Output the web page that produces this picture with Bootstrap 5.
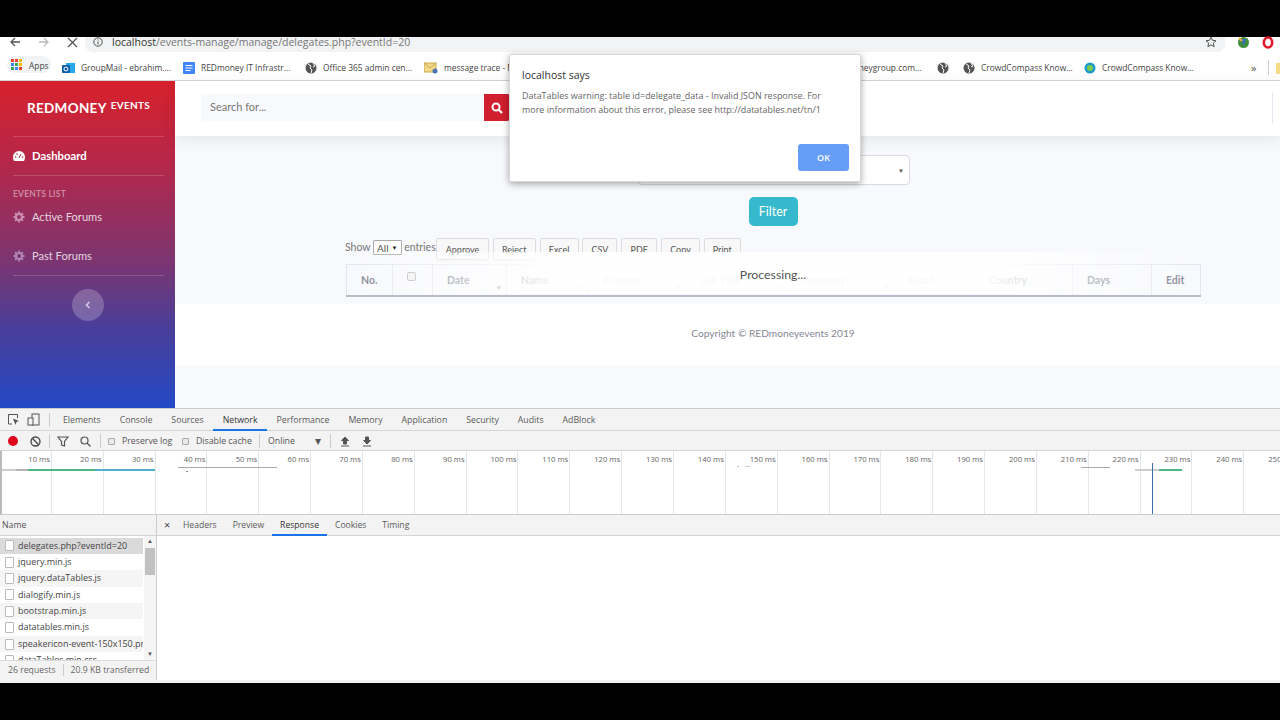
<!DOCTYPE html>
<html lang="en"><head><meta charset="utf-8"><title>Delegates</title>
<link rel="stylesheet" href="https://cdn.jsdelivr.net/npm/bootstrap@5.3.0/dist/css/bootstrap.min.css">
<style>
html,body{height:720px;overflow:hidden;background:#000}
body{font-family:"Noto Sans","Open Sans",sans-serif;position:relative;width:1280px}
.bar-black-top{height:37px;background:#000}
.chrome-top{height:19px;background:#fff;position:relative}
.chrome-nav{width:85px;padding-left:9px;gap:17px;height:10px}
.omni{position:absolute;left:85px;top:0;width:1140px;height:15px;background:#f1f3f4;border-radius:0 0 8px 8px;font:10.5px/10px "Open Sans",sans-serif;color:#777;padding:0 0 5px 8px;display:flex;align-items:center;gap:9px}
.omni b{font-weight:400;color:#333}
.chrome-right{position:absolute;left:1205px;top:0;height:10px;gap:0}
.ci-a{margin-left:20px}.ci-b{margin-left:12px}
.books{height:25px;background:#fff;border-bottom:1px solid #d4d5d6;font:8.4px/12px "Open Sans",sans-serif;color:#444;position:relative}
.bk{position:absolute;top:3px;height:18px;display:flex;align-items:center;gap:6px;white-space:nowrap}
.bk1{left:7px;background:#f1f3f4;border-radius:9px;padding:0 2px 0 4px;width:44px;top:0;height:17px;gap:7px}
.bk1 span{padding-top:3px}
.bk2{left:62px}.bk3{left:183px}.bk4{left:305px}.bk5{left:424px}
.bk6{left:782px}.bk7{left:937px}.bk8{left:963px}.bk9{left:1084px}
.bk10{left:1251px;color:#555;font-size:11px}
.bk-sep{position:absolute;left:1268px;top:4px;height:15px;width:1px;background:#d0d0d0}
.bk-folder{position:absolute;left:1276px;top:7px;width:4px;height:11px;background:#f5dc84}
.app-page{height:327px;background:#fff;font-family:"Lato",sans-serif}
.side{width:175px;flex:none;background:linear-gradient(180deg,#d7212b 0%,#b5274a 25%,#7c3570 55%,#4a3e98 75%,#2349c6 100%);color:#fff;padding:0 11px 0 13px}
.brandline{height:55px;font-family:"Lato",sans-serif;font-weight:700;font-size:13.5px;letter-spacing:.3px;padding-left:14px;padding-top:17px;line-height:20px}
.brandline sup{font-size:10px;top:-.45em;margin-left:1px}
.side-rule{height:1px;background:rgba(255,255,255,.17)}
.side-item{display:flex;align-items:center;gap:7px;font:11.1px/14px "Lato",sans-serif;color:rgba(255,255,255,.8)}
.side-item.on{color:#fff;font-weight:700;height:38px;font-size:11.3px}
.side-item.dim{height:39px}
.side-head{font:700 8.5px/11px "Lato",sans-serif;color:rgba(255,255,255,.45);padding-top:13px;letter-spacing:.2px;height:21px}
.side-tgl{width:32px;height:32px;border-radius:50%;background:rgba(255,255,255,.22);margin:13px 0 0 59px;display:flex;align-items:center;justify-content:center}
.main-col{background:#f8f9fc;min-width:0}
.topbar{height:55px;background:#fff;box-shadow:0 3px 14px rgba(58,59,69,.1);padding-left:26px;padding-top:13px;position:relative}
.searchbox{width:283px;height:27px;background:#f8f9fc;border-radius:3px 0 0 3px;font:11px/26px "Lato",sans-serif;color:#777;padding-left:9px}
.searchbtn{width:26px;height:27px;background:#d01f2d;display:flex;align-items:center;justify-content:center;border-radius:0 3px 3px 0}
.topdiv{position:absolute;left:1097px;top:12px;width:1px;height:30px;background:#e3e6f0}
.stage{height:168px;position:relative}
.stage-inner{width:854px;margin-left:171px}
.sel-row{height:61px;padding:19px 290px 0 0;display:flex;justify-content:flex-end}
.sel-fake{width:272px;height:30px;border:1px solid #d9dae5;border-radius:4px;background:#fff;display:flex;align-items:center;justify-content:flex-end;padding-right:5px;font-size:6px;color:#555}
.fil-row{height:43px;display:flex;justify-content:center}
.btn.fil-btn{width:49px;height:29px;padding:0;background:#36b9cc;color:#fff;border:0;font:12.5px/29px "Lato",sans-serif;border-radius:5px}
.tool-row{height:24px;font:10.5px/14px "Lato",sans-serif;color:#777;display:flex;align-items:flex-start;position:relative;margin-left:-1px}
.show-sel{display:inline-flex;align-items:center;gap:3px;height:15px;border:1px solid #aaa;background:#fff;padding:0 3px;margin:0 0;color:#555;font-size:10px;border-radius:1px;vertical-align:top}
.show-sel i{font-style:normal;font-size:6px;color:#222}
.tbtn-grp{position:absolute;left:91px;top:-2px;display:flex;gap:3.8px}
.btn.tbtn{height:22px;padding:0;background:#f8f8f8;border:1px solid #ddd;border-radius:2px;color:#555;font:9px/22px "Lato",sans-serif;box-shadow:0 1px 1px rgba(0,0,0,.05)}
.w53{width:53px}.w43{width:43px}.w39{width:39px}.w35{width:35px}.w36{width:36px}.w37{width:37px}
.table.dt{width:854px;table-layout:fixed;margin:0;--bs-table-bg:transparent;border-color:#e3e6f0;font:700 10.5px/14px "Lato",sans-serif;color:#858796}
.table.dt th{height:31px;padding:0 0 0 14px;text-align:left;vertical-align:middle;border:1px solid #e3e6f0;border-bottom:2px solid #b9bbc6;font-weight:700;color:#858796;position:relative}
.table.dt th.srt::after{content:"▾";position:absolute;right:5px;bottom:4px;font-size:7px;line-height:8px;color:#888}
.cb-fake{display:inline-block;width:9px;height:9px;border:1px solid #bbb;border-radius:2px;background:#f1f1f1;margin-bottom:4px}
.c1{width:46px}.c2{width:40px}.c3{width:74px}.c4{width:82px}.c5{width:98px}.c6{width:100px}.c7{width:108px}.c8{width:80px}.c9{width:98px}.c10{width:79px}.c11{width:49px}
.proc{position:absolute;left:171px;top:116px;width:854px;height:42px;background:linear-gradient(90deg,rgba(255,255,255,0) 0%,rgba(255,255,255,.95) 25%,rgba(255,255,255,.95) 75%,rgba(255,255,255,0) 100%);text-align:center;font:12.3px/46px "Lato",sans-serif;color:#555}
.foot{height:61px;background:#fff;font:10.2px/14px "Lato",sans-serif;color:#858796;padding-top:22px}
.foot div{width:854px;margin-left:171px;text-align:center}
.rest{flex:1;background:#f8f9fc}
.dev{background:#fff;font:8.75px/12px "Open Sans",sans-serif;color:#555;border-top:1px solid #ccc}
.dv-tabs{height:22px;background:#f3f3f3;border-bottom:1px solid #d5d5d5;position:relative}
.dv-tabs .ic1{position:absolute;left:7px;top:4px}
.dv-tabs .ic2{position:absolute;left:27px;top:4px}
.vsep{width:1px;background:#ccc;height:14px}
.dv-sep1{position:absolute;left:49px;top:4px}
.tabs-line{position:absolute;left:53.5px;top:0;display:flex;height:21px}
.dtab{padding:0 9.5px;line-height:22px;color:#5a5a5a;white-space:nowrap}
.dtab.act{border-bottom:2px solid #1a73e8;color:#333;height:22px}
.dv-tools{height:20px;background:#f3f3f3;border-bottom:1px solid #d5d5d5;position:relative}
.ti{position:absolute;top:3px;display:flex;align-items:center;gap:7px;height:14px;white-space:nowrap}
.ti-r{left:8px}
.ti-x{left:30px;gap:0}.ti-x .vsep{margin-left:8px}
.ti-a{left:57px;gap:0}.ti-a .vsep{margin-left:9px}.ti-s{margin-left:11px}
.ti-b{left:108px}.ti-c{left:182px}.ti-d{left:268px}.ti-e{left:315px;font-size:12px}.ti-f{left:330px}.ti-g{left:340px}.ti-h{left:362px}
.cb2{width:7px;height:7px;border:1px solid #aaa;background:#e9e9e9;border-radius:1px;display:inline-block}
.rec{width:10px;height:10px;border-radius:50%;background:#e0081c}
.tl{height:64px;position:relative;display:flex;background:#fff;border-bottom:1px solid #ccc;overflow:hidden;border-left:2px solid #bbb}
.tk{flex:0 0 51.85px;border-right:1px solid #e6e6e6;text-align:right;padding:2px 1px 0 0;font-size:7.7px;line-height:12px;color:#666;white-space:nowrap}
.tk:first-child{flex-basis:49.85px}
.mk{position:absolute;height:2px}
.m1{left:0;top:18px;width:14px;background:#ccc}.m2{left:14px;top:18px;width:12px;background:#b5b5b5}.m3{left:26px;top:18px;width:67px;background:#4db882}.m4{left:93px;top:18px;width:60px;background:#52aed0}
.m5{left:176px;top:16px;width:99px;height:1px;background:#aaa}
.m6{left:184px;top:20px;width:2px;height:1px;background:#888}
.m7{left:735px;top:15px;width:2px;height:1px;background:#bbb}.m8{left:743px;top:15px;width:5px;height:1px;background:#ccc}
.m9{left:1079px;top:16px;width:29px;height:1px;background:#aaa}
.m10{left:1133px;top:18px;width:24px;background:#ccc}.m11{left:1157px;top:18px;width:23px;background:#4db882}
.m12{left:1150px;top:12px;width:1px;height:51px;background:#3a6ea8}
.dv-low{height:165px}
.lst{width:157px;flex:none;border-right:1px solid #ccc;display:flex;flex-direction:column}
.lst-h{height:21px;background:#f3f3f3;border-bottom:1px solid #d5d5d5;line-height:20px;padding-left:2px;flex:none}
.lst-body{flex:1;overflow:hidden;position:relative;min-height:0;padding-top:1.5px}
.rw{height:16.4px;line-height:16.4px;display:flex;align-items:center;gap:4px;padding-left:5px;width:143px;white-space:nowrap;overflow:hidden;color:#444;font-size:8.95px}
.rw.alt{background:#f5f5f5}
.rw.sel{background:#dadada}
.doc{flex:none;width:9px;height:11px;border:1px solid #bbb;background:#fff;border-radius:1px}
.sbar{position:absolute;left:144px;top:0;width:12px;height:100%;background:#f5f5f5;display:flex;flex-direction:column;align-items:center}
.sth{width:10px;height:27px;background:#c1c1c1;margin-top:1px}
.sar{font-size:6px;line-height:11px;color:#555}
.sar.end{margin-top:auto}
.lst-s{height:20px;flex:none;background:#f3f3f3;border-top:1px solid #ddd;padding:0 0 2px 8px;color:#666;display:flex;gap:7px;white-space:nowrap;align-items:center;font-size:8.7px}
.lst-s .vsep{height:12px}
.det-h{height:21px;background:#f3f3f3;border-bottom:1px solid #d5d5d5;display:flex;padding-left:7px;flex:none}
.det-x{width:10px;line-height:20px;font-size:11px;color:#444}
.det-tabs{display:flex;margin-left:1px}
.dtab2{padding:0 8px;line-height:20px;color:#5a5a5a;font-size:8.6px}
.dtab2.act{border-bottom:2px solid #1a73e8;color:#333;height:21px}
.dlg{position:absolute;left:509px;top:54px;width:352px;height:128px;background:#fff;border:1px solid #d7d7d7;border-radius:2px;box-shadow:0 2px 7px rgba(0,0,0,.35);padding:13px 11px 0 12px;font-family:"Open Sans",sans-serif;z-index:5}
.dlg-t{font-size:10.5px;line-height:14px;color:#333;margin-bottom:7px}
.dlg-m{font-size:8.95px;line-height:14px;color:#666;height:55px;width:312px}
.dlg-f{display:flex;justify-content:flex-end}
.btn.okb{width:51px;height:27px;padding:0;background:#669df6;color:#fff;border:0;border-radius:3px;font:600 9px/27px "Open Sans",sans-serif}
.bot-band{height:3px;background:#f1f1f1}
</style></head>
<body>
<div class="bar-black-top"></div>
<div class="chrome-top d-flex">
  <div class="d-flex align-items-center chrome-nav">
    <svg width="12" height="12" viewBox="0 0 12 12"><path d="M11 6H2M6 2 2 6l4 4" fill="none" stroke="#555" stroke-width="1.3"/></svg>
    <svg width="12" height="12" viewBox="0 0 12 12"><path d="M1 6h9M6 2l4 4-4 4" fill="none" stroke="#bbb" stroke-width="1.3"/></svg>
    <svg width="11" height="11" viewBox="0 0 11 11"><path d="M1 1l9 9M10 1l-9 9" fill="none" stroke="#555" stroke-width="1.3"/></svg>
  </div>
  <div class="omni"><svg width="10" height="10" viewBox="0 0 10 10"><circle cx="5" cy="5" r="4.2" fill="none" stroke="#555"/><path d="M5 4.5v3M5 2.5v1" stroke="#555"/></svg><span><b>localhost</b>/events-manage/manage/delegates.php?eventId=20</span></div>
  <div class="chrome-right d-flex align-items-center">
    <svg width="12" height="12" viewBox="0 0 12 12"><path d="M6 1l1.5 3.3 3.5.4-2.600 2.400.7 3.600L6 8.900l-3.100 1.800.7-3.600L1 4.700l3.500-.4z" fill="none" stroke="#555"/></svg>
    <svg class="ci-a" width="13" height="13" viewBox="0 0 13 13"><circle cx="6.5" cy="6.5" r="5.5" fill="#3e8e3e"/><path d="M4 3h5l-2.500 7z" fill="#3a6ec2"/><path d="M2 2l3 3" stroke="#e8b030" stroke-width="2"/></svg>
    <svg class="ci-b" width="12" height="13" viewBox="0 0 12 13"><ellipse cx="6" cy="6.5" rx="4.2" ry="5" fill="none" stroke="#e0182b" stroke-width="2.6"/></svg>
  </div>
</div>
<div class="books">
  <div class="bk bk1"><svg width="11" height="11" viewBox="0 0 11 11"><g><rect x="0" y="0" width="3" height="3" fill="#ea4335"/><rect x="4" y="0" width="3" height="3" fill="#ea4335"/><rect x="8" y="0" width="3" height="3" fill="#fbbc04"/><rect x="0" y="4" width="3" height="3" fill="#4285f4"/><rect x="4" y="4" width="3" height="3" fill="#34a853"/><rect x="8" y="4" width="3" height="3" fill="#fbbc04"/><rect x="0" y="8" width="3" height="3" fill="#34a853"/><rect x="4" y="8" width="3" height="3" fill="#4285f4"/><rect x="8" y="8" width="3" height="3" fill="#ea4335"/></g></svg><span>Apps</span></div>
  <div class="bk bk2"><svg width="13" height="13" viewBox="0 0 13 13"><rect x="4" y="1" width="9" height="10" fill="#28a8ea"/><rect x="0" y="3" width="8" height="8" rx="1" fill="#0f5fa8"/><circle cx="4" cy="7" r="2" fill="none" stroke="#fff"/></svg><span>GroupMail - ebrahim....</span></div>
  <div class="bk bk3"><svg width="12" height="12" viewBox="0 0 12 12"><rect width="12" height="12" rx="1" fill="#4285f4"/><path d="M2.500 3.500h7M2.500 6h7M2.500 8.500h5" stroke="#fff"/></svg><span>REDmoney IT Infrastr...</span></div>
  <div class="bk bk4"><svg width="12" height="12" viewBox="0 0 12 12"><circle cx="6" cy="6" r="5.5" fill="#555"/><path d="M3 2l3 2-1 2 2 2-1 3M8 1l2 3-2 1" fill="none" stroke="#fff"/></svg><span>Office 365 admin cen...</span></div>
  <div class="bk bk5"><svg width="14" height="12" viewBox="0 0 14 12"><rect y="1" width="12" height="9" fill="#f3d98a" stroke="#c9a94e"/><path d="M0 1l6 5 6-5" fill="none" stroke="#c9a94e"/><circle cx="11" cy="9" r="2.5" fill="#4a76b8"/></svg><span>message trace - M</span></div>
  <div class="bk bk6"><span class="ms-5">REDmoneygroup.com...</span></div>
  <div class="bk bk7"><svg width="12" height="12" viewBox="0 0 12 12"><circle cx="6" cy="6" r="5.5" fill="#555"/><path d="M3 2l3 2-1 2 2 2-1 3M8 1l2 3-2 1" fill="none" stroke="#fff"/></svg></div>
  <div class="bk bk8"><svg width="12" height="12" viewBox="0 0 12 12"><circle cx="6" cy="6" r="5.5" fill="#555"/><path d="M3 2l3 2-1 2 2 2-1 3M8 1l2 3-2 1" fill="none" stroke="#fff"/></svg><span>CrowdCompass Know...</span></div>
  <div class="bk bk9"><svg width="12" height="12" viewBox="0 0 12 12"><circle cx="6" cy="6" r="5.5" fill="#1d9ac9"/><circle cx="6" cy="6" r="3" fill="#7ec94e"/></svg><span>CrowdCompass Know...</span></div>
  <div class="bk bk10">»</div><div class="bk-sep"></div><div class="bk-folder"></div>
</div>
<div class="app-page d-flex">
  <aside class="side d-flex flex-column">
    <div class="brandline">REDMONEY <sup>EVENTS</sup></div>
    <div class="side-rule"></div>
    <div class="side-item on"><svg width="12" height="10" viewBox="0 0 12 10"><path d="M6 0a6 6 0 0 1 6 6c0 1.500-.4 2.800-1 4H1C.4 8.800 0 7.500 0 6a6 6 0 0 1 6-6z" fill="#fff"/><path d="M6 7l2-4" stroke="#b5274a"/><circle cx="2.500" cy="6" r=".8" fill="#b5274a"/><circle cx="4" cy="3" r=".8" fill="#b5274a"/><circle cx="9.500" cy="6" r=".8" fill="#b5274a"/></svg><span>Dashboard</span></div>
    <div class="side-rule"></div>
    <div class="side-head">EVENTS LIST</div>
    <div class="side-item dim"><svg width="12" height="12" viewBox="0 0 12 12"><circle cx="6" cy="6" r="3" fill="none" stroke="#c98fb0" stroke-width="2.200"/><path d="M6 .5v2M6 9.500v2M.5 6h2M9.500 6h2M2.100 2.100l1.400 1.400M8.500 8.500l1.400 1.400M2.100 9.900l1.400-1.400M8.500 3.500l1.400-1.400" stroke="#c98fb0" stroke-width="1.800"/></svg><span>Active Forums</span></div>
    <div class="side-item dim"><svg width="12" height="12" viewBox="0 0 12 12"><circle cx="6" cy="6" r="3" fill="none" stroke="#b084b4" stroke-width="2.200"/><path d="M6 .5v2M6 9.500v2M.5 6h2M9.500 6h2M2.100 2.100l1.400 1.400M8.500 8.500l1.400 1.400M2.100 9.900l1.400-1.400M8.500 3.500l1.400-1.400" stroke="#b084b4" stroke-width="1.800"/></svg><span>Past Forums</span></div>
    <div class="side-rule"></div>
    <div class="side-tgl"><svg width="6" height="8" viewBox="0 0 6 8"><path d="M4.500 1 1.500 4l3 3" fill="none" stroke="#d5c8e6" stroke-width="1.600"/></svg></div>
  </aside>
  <div class="main-col flex-grow-1 d-flex flex-column">
    <div class="topbar d-flex">
      <div class="searchbox">Search for...</div>
      <div class="searchbtn"><svg width="12" height="12" viewBox="0 0 12 12"><circle cx="5" cy="5" r="3.500" fill="none" stroke="#fff" stroke-width="2"/><path d="M7.500 7.500 11 11" stroke="#fff" stroke-width="2.200"/></svg></div>
      <div class="topdiv"></div>
    </div>
    <div class="stage">
      <div class="stage-inner">
        <div class="sel-row"><div class="sel-fake">▼</div></div>
        <div class="fil-row"><button class="btn fil-btn">Filter</button></div>
        <div class="tool-row">
          <span>Show <span class="show-sel">All <i>▼</i></span> entries</span>
          <div class="tbtn-grp">
            <button class="btn tbtn w53">Approve</button><button class="btn tbtn w43">Reject</button><button class="btn tbtn w39">Excel</button><button class="btn tbtn w35">CSV</button><button class="btn tbtn w36">PDF</button><button class="btn tbtn w39">Copy</button><button class="btn tbtn w37">Print</button>
          </div>
        </div>
        <table class="table dt">
          <thead><tr><th class="c1">No.</th><th class="c2"><span class="cb-fake"></span></th><th class="c3 srt">Date</th><th class="c4 srt">Name</th><th class="c5 srt">Purpose</th><th class="c6 srt">Job Title</th><th class="c7 srt">Company</th><th class="c8">Email</th><th class="c9">Country</th><th class="c10">Days</th><th class="c11">Edit</th></tr></thead>
        </table>
      </div>
      <div class="proc">Processing...</div>
    </div>
    <div class="foot"><div>Copyright © REDmoneyevents 2019</div></div>
    <div class="rest"></div>
  </div>
</div>
<div class="dev">
  <div class="dv-tabs">
    <svg class="ic1" width="13" height="13" viewBox="0 0 13 13"><path d="M5 11H1.500V1.500h9V5" fill="none" stroke="#555"/><path d="M6 5.500l6 2.500-2.500 1L8.500 12z" fill="#555"/></svg>
    <svg class="ic2" width="13" height="13" viewBox="0 0 13 13"><rect x="5" y="1" width="7" height="11" fill="none" stroke="#555"/><rect x="1" y="5" width="5" height="7" fill="#f3f3f3" stroke="#555"/></svg>
    <div class="vsep dv-sep1"></div>
    <div class="tabs-line"><div class="dtab">Elements</div><div class="dtab">Console</div><div class="dtab">Sources</div><div class="dtab act">Network</div><div class="dtab">Performance</div><div class="dtab">Memory</div><div class="dtab">Application</div><div class="dtab">Security</div><div class="dtab">Audits</div><div class="dtab">AdBlock</div></div>
  </div>
  <div class="dv-tools">
    <div class="ti ti-r"><span class="rec"></span></div>
    <div class="ti ti-x"><svg width="11" height="11" viewBox="0 0 11 11"><circle cx="5.500" cy="5.500" r="4.500" fill="none" stroke="#444" stroke-width="1.300"/><path d="M2.300 2.300l6.400 6.400" stroke="#444" stroke-width="1.300"/></svg><span class="vsep"></span></div>
    <div class="ti ti-a"><svg width="12" height="11" viewBox="0 0 12 11"><path d="M1 1h10L7.500 5.500V10l-3-1V5.500z" fill="none" stroke="#555" stroke-width="1.200"/></svg><svg class="ti-s" width="11" height="11" viewBox="0 0 11 11"><circle cx="4.500" cy="4.500" r="3.500" fill="none" stroke="#555" stroke-width="1.200"/><path d="M7 7l3.500 3.500" stroke="#555" stroke-width="1.200"/></svg><span class="vsep"></span></div>
    <div class="ti ti-b"><span class="cb2"></span><span>Preserve log</span></div>
    <div class="ti ti-c"><span class="cb2"></span><span>Disable cache</span><span class="vsep"></span></div>
    <div class="ti ti-d">Online</div>
    <div class="ti ti-e">▾</div>
    <div class="ti ti-f"><span class="vsep"></span></div>
    <div class="ti ti-g"><svg width="10" height="11" viewBox="0 0 10 11"><path d="M5 1 1.500 4.500H3.500V8h3V4.500h2zM1 10h8" fill="#555" stroke="#555"/></svg></div>
    <div class="ti ti-h"><svg width="10" height="11" viewBox="0 0 10 11"><path d="M5 8 1.500 4.500H3.500V1h3v3.500h2zM1 10h8" fill="#555" stroke="#555"/></svg></div>
  </div>
  <div class="tl">
    <div class="tk">10 ms</div><div class="tk">20 ms</div><div class="tk">30 ms</div><div class="tk">40 ms</div><div class="tk">50 ms</div><div class="tk">60 ms</div><div class="tk">70 ms</div><div class="tk">80 ms</div><div class="tk">90 ms</div><div class="tk">100 ms</div><div class="tk">110 ms</div><div class="tk">120 ms</div><div class="tk">130 ms</div><div class="tk">140 ms</div><div class="tk">150 ms</div><div class="tk">160 ms</div><div class="tk">170 ms</div><div class="tk">180 ms</div><div class="tk">190 ms</div><div class="tk">200 ms</div><div class="tk">210 ms</div><div class="tk">220 ms</div><div class="tk">230 ms</div><div class="tk">240 ms</div><div class="tk">250 ms</div>
    <span class="mk m1"></span><span class="mk m2"></span><span class="mk m3"></span><span class="mk m4"></span><span class="mk m5"></span><span class="mk m6"></span><span class="mk m7"></span><span class="mk m8"></span><span class="mk m9"></span><span class="mk m10"></span><span class="mk m11"></span><span class="mk m12"></span>
  </div>
  <div class="dv-low d-flex">
    <div class="lst">
      <div class="lst-h">Name</div>
      <div class="lst-body">
        <div class="rw sel"><span class="doc"></span>delegates.php?eventId=20</div>
        <div class="rw"><span class="doc"></span>jquery.min.js</div>
        <div class="rw alt"><span class="doc"></span>jquery.dataTables.js</div>
        <div class="rw"><span class="doc"></span>dialogify.min.js</div>
        <div class="rw alt"><span class="doc"></span>bootstrap.min.js</div>
        <div class="rw"><span class="doc"></span>datatables.min.js</div>
        <div class="rw alt"><span class="doc"></span>speakericon-event-150x150.png</div>
        <div class="rw"><span class="doc"></span>dataTables.min.css</div>
        <div class="sbar"><div class="sar">▲</div><div class="sth"></div><div class="sar end">▼</div></div>
      </div>
      <div class="lst-s"><span>26 requests</span><span class="vsep"></span><span>20.9 KB transferred</span></div>
    </div>
    <div class="flex-grow-1 d-flex flex-column">
      <div class="det-h"><span class="det-x">×</span><div class="det-tabs"><div class="dtab2">Headers</div><div class="dtab2">Preview</div><div class="dtab2 act">Response</div><div class="dtab2">Cookies</div><div class="dtab2">Timing</div></div></div>
      <div class="flex-grow-1 bg-white"></div>
    </div>
  </div>
  <div class="bot-band"></div>
</div>
<div class="dlg">
  <div class="dlg-t">localhost says</div>
  <div class="dlg-m">DataTables warning: table id=delegate_data - Invalid JSON response. For more information about this error, please see http://datatables.net/tn/1</div>
  <div class="dlg-f"><button class="btn okb">OK</button></div>
</div>
</body></html>
